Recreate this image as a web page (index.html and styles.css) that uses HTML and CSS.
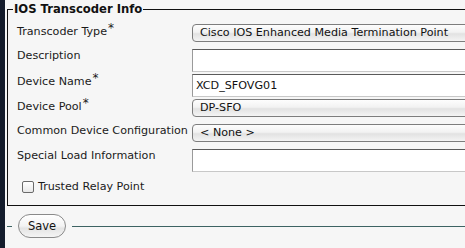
FILE: index.html
```html
<!DOCTYPE html>
<html>
<head>
<meta charset="utf-8">
<link rel="stylesheet" href="styles.css">
</head>
<body>
<div class="page">
  <div class="strip"></div>
  <div class="main">
    <fieldset class="box">
      <legend class="title">IOS Transcoder Info</legend>
      <div class="row">
        <label class="lbl">Transcoder Type<span class="req">*</span></label>
        <select class="sel"><option>Cisco IOS Enhanced Media Termination Point</option></select>
      </div>
      <div class="row">
        <label class="lbl">Description</label>
        <input class="txt" type="text" value="">
      </div>
      <div class="row">
        <label class="lbl">Device Name<span class="req">*</span></label>
        <input class="txt" type="text" value="XCD_SFOVG01">
      </div>
      <div class="row">
        <label class="lbl">Device Pool<span class="req">*</span></label>
        <select class="sel"><option>DP-SFO</option></select>
      </div>
      <div class="row">
        <label class="lbl">Common Device Configuration</label>
        <select class="sel"><option>&lt; None &gt;</option></select>
      </div>
      <div class="row">
        <label class="lbl">Special Load Information</label>
        <input class="txt" type="text" value="">
      </div>
      <div class="check">
        <span class="cb"></span>
        <span class="cbl">Trusted Relay Point</span>
      </div>
    </fieldset>
    <div class="actions">
      <span class="rule short"></span>
      <button class="btn">Save</button>
      <span class="rule long"></span>
    </div>
  </div>
</div>
</body>
</html>
```
FILE: styles.css
```css
html, body {
  margin: 0;
  padding: 0;
  background: #f6f6f6;
  overflow: hidden;
  width: 465px;
  height: 248px;
}
.page {
  display: flex;
  height: 248px;
  font-family: "DejaVu Sans", Verdana, sans-serif;
  font-size: 11.15px;
  color: #1a1a1a;
}
.strip {
  width: 5px;
  flex: none;
  background: #141c2c;
}
.main {
  flex: none;
  width: 700px;
  padding-left: 2px;
}
.box {
  margin: 0;
  margin-top: 2px;
  border: 1px solid #111;
  border-right: none;
  padding: 8px 0 11px 9px;
}
.title {
  font-weight: bold;
  font-size: 11.6px;
  padding: 0 1px;
  margin-left: -4px;
  line-height: 14px;
  color: #111;
}
.row {
  display: flex;
  align-items: flex-start;
  height: 25px;
}
.lbl {
  width: 175px;
  flex: none;
  line-height: 14px;
}
.req {
  font-size: 12px;
  position: relative;
  top: -3px;
  margin-left: 1px;
}
.sel {
  appearance: none;
  -webkit-appearance: none;
  width: 320px;
  height: 18px;
  margin: 0;
  padding: 0 0 0 7px;
  border: 1px solid #7d7d7d;
  border-radius: 4px;
  background: linear-gradient(#fdfdfd 0%, #f2f2f2 45%, #e2e2e2 55%, #f4f4f4 100%);
  font-family: "DejaVu Sans", Verdana, sans-serif;
  font-size: 11.15px;
  color: #111;
  line-height: 16px;
}
.txt {
  width: 320px;
  height: 23px;
  margin: 0;
  padding: 0 0 0 3px;
  box-sizing: border-box;
  border: 1px solid #c8c8c8;
  border-top-color: #5a5a5a;
  border-left-color: #9a9a9a;
  background: #fff;
  font-family: "DejaVu Sans", Verdana, sans-serif;
  font-size: 11.15px;
  color: #111;
}
.check {
  display: flex;
  align-items: center;
  padding-left: 5px;
  margin-top: 6px;
  height: 14px;
  gap: 4px;
}
.cb {
  width: 10px;
  height: 10px;
  border: 1px solid #6a6a6a;
  border-radius: 2px;
  background: linear-gradient(#ffffff, #e8e8e8);
}
.cbl {
  line-height: 14px;
}
.actions {
  display: flex;
  align-items: center;
  margin-top: 8px;
  height: 24px;
}
.rule {
  height: 1px;
  background: #3d6363;
}
.short {
  width: 5px;
  margin-right: 6px;
}
.long {
  flex: 1;
  margin-left: 6px;
}
.btn {
  width: 48px;
  height: 24px;
  margin: 0;
  padding: 0;
  border: 1px solid #8a8a8a;
  border-radius: 12px;
  background: linear-gradient(#ffffff 0%, #f3f3f3 50%, #e4e4e4 60%, #f4f4f4 100%);
  font-family: "DejaVu Sans", Verdana, sans-serif;
  font-size: 11.5px;
  color: #111;
}
```
